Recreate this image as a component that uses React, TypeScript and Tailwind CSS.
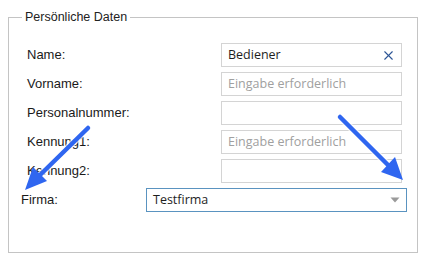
import React from 'react';
import { X } from 'lucide-react';

const rows: { label: string; value?: string; clear?: boolean }[] = [
  { label: 'Name:', value: 'Bediener', clear: true },
  { label: 'Vorname:' },
  { label: 'Personalnummer:', value: '' },
  { label: 'Kennung1:' },
  { label: 'Kennung2:', value: '' },
];

const Field = ({ value, clear }: { value?: string; clear?: boolean }) => (
  <div className="w-[181px] h-[24px] border border-[#d4d4d4] bg-white flex items-center pl-[6px] pr-[5px]">
    {value === undefined ? (
      <span className="text-[#a0a0a0] text-[12.5px] font-['Open_Sans',sans-serif]">Eingabe erforderlich</span>
    ) : (
      <span className="text-[#1e1e1e] text-[12.5px] font-['Open_Sans',sans-serif]">{value}</span>
    )}
    {clear && <X size={15} strokeWidth={1.8} className="ml-auto text-[#2d5596]" />}
  </div>
);

export default function App() {
  return (
    <div className="relative w-[426px] h-[263px] bg-white font-['Liberation_Sans',Arial,sans-serif]">
      <div className="pt-[10px] pl-[8px]">
        <fieldset className="w-[410px] h-[243px] border border-[#c4c4c4] m-0 p-0 min-w-0">
          <legend className="ml-[13px] px-[3px] text-[12.5px] leading-[14px] text-[#222]">Persönliche Daten</legend>
          <div className="pt-[19px] flex flex-col gap-[5px]">
            {rows.map((r) => (
              <div key={r.label} className="flex items-center pl-[18px]">
                <span className="w-[194px] text-[13px] text-[#1a1a1a]">{r.label}</span>
                <Field value={r.value} clear={r.clear} />
              </div>
            ))}
            <div className="flex items-center pl-[12px]">
              <span className="w-[125px] text-[13px] text-[#1a1a1a]">Firma:</span>
              <div className="w-[261px] h-[24px] border border-[#5a93c0] bg-white flex items-center pl-[6px] pr-[6px]">
                <span className="text-[#1e1e1e] text-[12.5px] font-['Open_Sans',sans-serif]">Testfirma</span>
                <svg width="10" height="6" viewBox="0 0 10 6" className="ml-auto">
                  <path d="M0.5 0.5 L9.5 0.5 L5 5.5 Z" fill="#9a9a9a" />
                </svg>
              </div>
            </div>
          </div>
        </fieldset>
      </div>
      <svg className="absolute inset-0 pointer-events-none" width="426" height="263" viewBox="0 0 426 263">
        <g stroke="#ffffff" strokeOpacity="0.7" strokeLinejoin="round">
          <line x1="88" y1="128" x2="40" y2="175" strokeWidth="7" />
          <line x1="340" y1="117" x2="389" y2="166" strokeWidth="7" />
        </g>
        <line x1="88" y1="128" x2="40" y2="175" stroke="#2f66f0" strokeWidth="4.5" strokeLinecap="round" />
        <polygon points="25,190 47,181 33,167" fill="#2f66f0" />
        <line x1="340" y1="117" x2="389" y2="166" stroke="#2f66f0" strokeWidth="4.5" strokeLinecap="round" />
        <polygon points="403,180 381,172 395,157" fill="#2f66f0" />
      </svg>
    </div>
  );
}
